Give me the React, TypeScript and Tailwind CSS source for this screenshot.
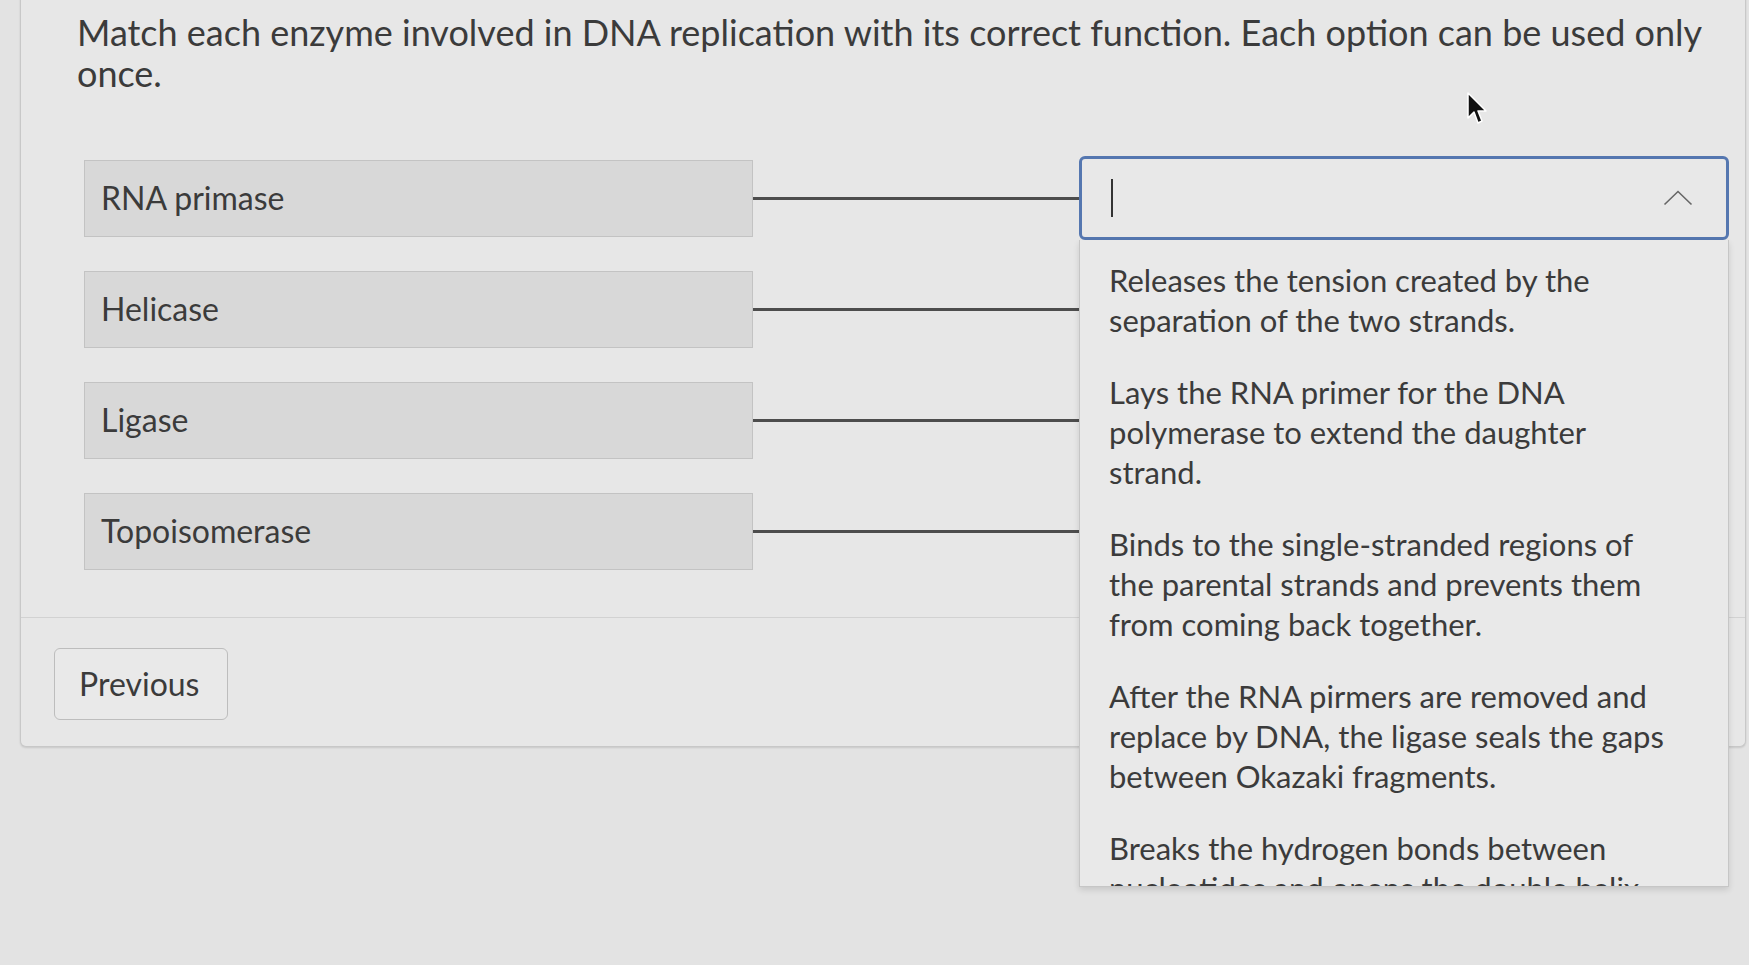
const ENZYMES = ["RNA primase", "Helicase", "Ligase", "Topoisomerase"];

const OPTIONS = [
  "Releases the tension created by the separation of the two strands.",
  "Lays the RNA primer for the DNA polymerase to extend the daughter strand.",
  "Binds to the single-stranded regions of the parental strands and prevents them from coming back together.",
  "After the RNA pirmers are removed and replace by DNA, the ligase seals the gaps between Okazaki fragments.",
  "Breaks the hydrogen bonds between nucleotides and opens the double helix.",
];

function OptionMenu() {
  return (
    <div className="absolute left-0 top-full z-10 h-[647px] w-full overflow-hidden border border-t-0 border-[#c6c6c6] bg-[#e9e9e9] pl-[29px] pt-[20px] shadow-[0_3px_6px_rgba(0,0,0,0.12)]">
      <ul className="flex w-[566px] flex-col gap-[32px]">
        {OPTIONS.map((opt) => (
          <li key={opt} className="text-[31px] leading-[40px] text-[#3b3b3b]">
            {opt}
          </li>
        ))}
      </ul>
    </div>
  );
}

function MatchRow({ name, open }: { name: string; open: boolean }) {
  return (
    <div className="flex h-[84px] items-center">
      <div className="flex h-[77px] w-[669px] items-center border border-[#c3c3c3] bg-[#d8d8d8] pl-[16px] text-[32px] text-[#3b3b3b]">
        {name}
      </div>
      <div className="h-[3px] w-[326px] bg-[#4d4d4d]" />
      <div className="relative h-[84px] w-[650px]">
        {open ? (
          <>
            <div className="flex h-full items-center justify-between rounded-[6px] border-[3px] border-[#5577b0] bg-[#e8e8e8] pl-[29px] pr-[33px]">
              <span className="h-[38px] w-[2px] bg-[#333]" />
              <svg width="30" height="16" viewBox="0 0 30 16" fill="none">
                <polyline points="1.5,14.5 15,1.5 28.5,14.5" stroke="#666" strokeWidth="1.6" />
              </svg>
            </div>
            <OptionMenu />
          </>
        ) : (
          <div className="h-full rounded-[6px] border border-[#bdbdbd] bg-[#e8e8e8]" />
        )}
      </div>
    </div>
  );
}

export default function App() {
  return (
    <div className="relative min-h-screen w-full overflow-hidden bg-[#e3e3e3] font-['Lato','Liberation_Sans',sans-serif] text-[#3b3b3b]">
      <div className="-mt-2 ml-[20px] mr-[3px] rounded-b-[6px] border border-t-0 border-[#c8c8c8] bg-[#e7e7e7] pt-[20px] shadow-[0_1px_2px_rgba(0,0,0,0.12)]">
        <p className="pl-[56px] pr-[20px] text-[36px] leading-[41px]">
          Match each enzyme involved in DNA replication with its correct function. Each option can be used only once.
        </p>

        <div className="mt-[62px] flex flex-col gap-[27px] pl-[63px]">
          {ENZYMES.map((name, i) => (
            <MatchRow key={name} name={name} open={i === 0} />
          ))}
        </div>

        <div className="mt-[44px] border-t border-[#d2d2d2]" />

        <div className="flex items-center px-[33px] pb-[26px] pt-[30px]">
          <button
            type="button"
            className="flex h-[72px] w-[174px] items-center rounded-[6px] border border-[#bdbdbd] bg-[#e9e9e9] pl-[24px] text-[32px] text-[#3b3b3b]"
          >
            Previous
          </button>
        </div>
      </div>

      {/* mouse pointer */}
      <svg className="absolute left-[1466px] top-[92px] z-20" width="22" height="34" viewBox="0 0 22 34">
        <path d="M2 1 L2 26 L8 20 L12 31 L16 29 L12 19 L20 19 Z" fill="#111" stroke="#fff" strokeWidth="1.5" strokeLinejoin="round" />
      </svg>
    </div>
  );
}
